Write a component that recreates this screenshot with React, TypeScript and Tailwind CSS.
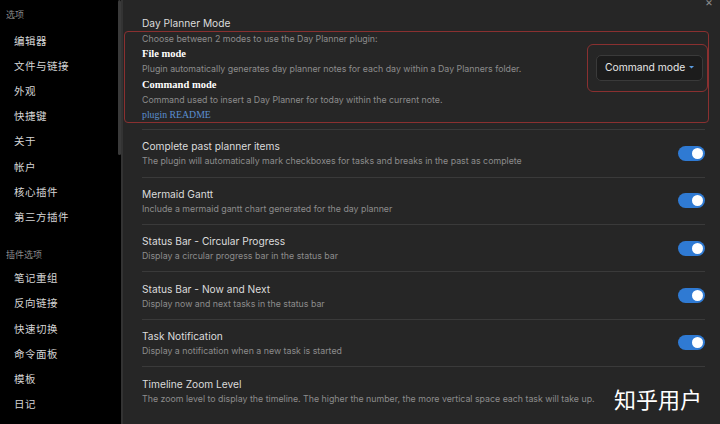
import React from 'react';

const generalItems = ['编辑器', '文件与链接', '外观', '快捷键', '关于', '帐户', '核心插件', '第三方插件'];
const pluginItems = ['笔记重组', '反向链接', '快速切换', '命令面板', '模板', '日记'];

const toggles = [
  { title: 'Complete past planner items', desc: 'The plugin will automatically mark checkboxes for tasks and breaks in the past as complete' },
  { title: 'Mermaid Gantt', desc: 'Include a mermaid gantt chart generated for the day planner' },
  { title: 'Status Bar - Circular Progress', desc: 'Display a circular progress bar in the status bar' },
  { title: 'Status Bar - Now and Next', desc: 'Display now and next tasks in the status bar' },
  { title: 'Task Notification', desc: 'Display a notification when a new task is started' },
];

const sans = { fontFamily: 'Inter, "Noto Sans CJK SC", sans-serif' };
const serif = { fontFamily: '"Liberation Serif", serif' };

function Toggle() {
  return (
    <div className="w-[27px] h-[15px] rounded-full bg-[#2f7ad3] flex items-center justify-end pr-[2px] shrink-0">
      <div className="w-[11px] h-[11px] rounded-full bg-white" />
    </div>
  );
}

export default function App() {
  return (
    <div className="w-[720px] h-[424px] flex overflow-hidden bg-[#262626]" style={sans}>
      {/* Sidebar */}
      <div className="relative w-[121px] h-full bg-black shrink-0 pt-[9px]">
        <div className="absolute right-[0px] top-0 w-[3px] h-[155px] bg-[#3a3a3a] rounded-sm" />
        <div className="text-[9px] leading-[12px] text-[#8a8a8a] pl-[6px] mb-[8px]">选项</div>
        <ul>
          {generalItems.map((item) => (
            <li key={item} className="h-[25.2px] flex items-center pl-[14px] text-[10.5px] tracking-[0.5px] text-[#d6d6d6]">
              {item}
            </li>
          ))}
        </ul>
        <div className="text-[9px] leading-[12px] text-[#8a8a8a] pl-[6px] mt-[18px] mb-[6px]">插件选项</div>
        <ul>
          {pluginItems.map((item) => (
            <li key={item} className="h-[25.2px] flex items-center pl-[14px] text-[10.5px] tracking-[0.5px] text-[#d6d6d6]">
              {item}
            </li>
          ))}
        </ul>
      </div>

      {/* Main */}
      <div className="relative flex-1 h-full pl-[19px] pr-[15px] pt-[15px] border-l-[2px] border-[#333]">
        <div className="absolute right-[7px] top-[-4px] text-[#8a8a8a] text-[12px] leading-[12px]">×</div>

        {/* Day Planner Mode */}
        <div className="relative pb-[7px] border-b border-[#3a3a3a]">
          <div className="absolute left-[-18px] right-[-4px] top-[16px] bottom-[6px] rounded-[4px] border border-[#8a3030]" />
          <div className="text-[10.2px] leading-[16px] text-[#dcdcdc]">Day Planner Mode</div>
          <div className="flex items-center">
            <div className="flex-1">
              <div className="text-[8.8px] leading-[15.2px] text-[#8c8c8c]">Choose between 2 modes to use the Day Planner plugin:</div>
              <div className="text-[10.5px] leading-[15.2px] font-bold text-white" style={serif}>File mode</div>
              <div className="text-[8.8px] leading-[15.2px] text-[#8c8c8c]">Plugin automatically generates day planner notes for each day within a Day Planners folder.</div>
              <div className="text-[10.5px] leading-[15.2px] font-bold text-white" style={serif}>Command mode</div>
              <div className="text-[8.8px] leading-[15.2px] text-[#8c8c8c]">Command used to insert a Day Planner for today within the current note.</div>
              <div className="text-[9.8px] leading-[15.2px] text-[#5b8fd0]" style={serif}>plugin README</div>
            </div>
            <div className="mb-[18px] rounded-[6px] border border-[#8a3030] pl-[8px] pr-[4px] py-[10px] -mr-[3px]">
              <div className="w-[107px] h-[26px] rounded-[5px] bg-[#1c1c1c] border border-[#3a3a3a] flex items-center justify-between pl-[8px] pr-[7px] text-[10.3px] whitespace-nowrap text-[#e6e6e6]">
                <span>Command mode</span>
                <svg className="shrink-0" width="7" height="5" viewBox="0 0 7 5"><path d="M1 1 L3.5 3.5 L6 1 Z" fill="#5a9be0" /></svg>
              </div>
            </div>
          </div>
        </div>

        {toggles.map((t) => (
          <div key={t.title} className="h-[47.4px] flex items-center border-b border-[#3a3a3a]">
            <div className="flex-1">
              <div className="text-[10.2px] leading-[16px] text-[#dcdcdc]">{t.title}</div>
              <div className="text-[8.8px] leading-[14px] text-[#8c8c8c]">{t.desc}</div>
            </div>
            <Toggle />
          </div>
        ))}

        <div className="h-[47.4px] flex items-center">
          <div className="flex-1">
            <div className="text-[10.2px] leading-[16px] text-[#dcdcdc]">Timeline Zoom Level</div>
            <div className="text-[8.8px] leading-[14px] text-[#8c8c8c]">The zoom level to display the timeline. The higher the number, the more vertical space each task will take up.</div>
          </div>
        </div>

        <div className="absolute right-[18px] bottom-[13px] text-[22px] leading-[26px] text-white" style={{ fontFamily: '"Noto Sans CJK SC", sans-serif' }}>知乎用户</div>
      </div>
    </div>
  );
}
